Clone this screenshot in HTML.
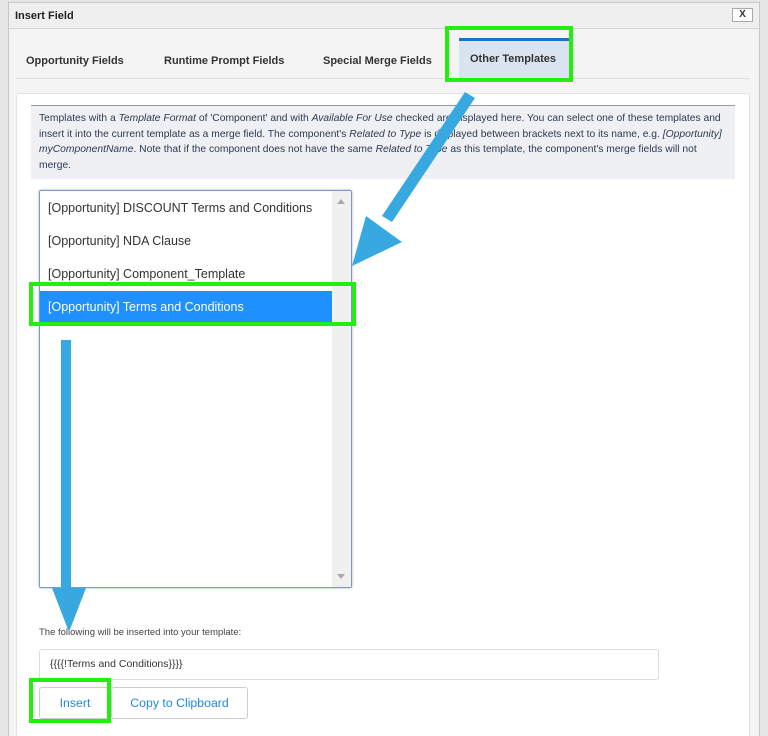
<!DOCTYPE html>
<html style="overflow:hidden;height:736px"><head><meta charset="utf-8"><style>
*{box-sizing:border-box;margin:0;padding:0}
body{width:768px;height:736px;overflow:hidden;background:#e6e6e6;font-family:"Liberation Sans",sans-serif;position:relative}
.abs{position:absolute}
#dlg{left:8px;top:2px;width:752px;height:734px;background:#f4f4f4;border:1px solid #c8c8c8;border-bottom:0;overflow:hidden}
#hdr{left:0;top:0;width:750px;height:26px;background:#efefef;border-bottom:1px solid #d6d6d6;font-size:11px;font-weight:bold;color:#222;padding:7px 0 0 6px}
#x{right:6px;top:5px;width:21px;height:14px;border:1px solid #aaa;background:#fff;font-size:10px;text-align:center;line-height:12px;font-weight:bold;color:#333}
.tab{top:52px;font-size:11px;font-weight:bold;color:#333}
#panel{left:7px;top:90px;width:734px;height:660px;background:#fff;border:1px solid #e2e2e2;border-radius:3px}
#desc{left:22px;top:102px;width:704px;height:74px;background:#eef0f3;border-top:1px solid #999;font-size:10.3px;line-height:15.5px;color:#2b3a55;padding:5px 8px}
#list{left:30px;top:187px;width:313px;height:398px;border:1px solid #7a9cc8;border-radius:2px;background:#fff;box-shadow:0 0 2px #9ab}
#sb{right:0;top:0;width:19px;height:396px;background:#f0f0f0}
.it{left:8px;font-size:12.5px;color:#333}
#sel{left:0;top:100px;width:292px;height:33px;background:#1e90ff}
#inp{left:30px;top:646px;width:620px;height:31px;border:1px solid #ddd;border-radius:3px;font-size:10.5px;color:#333;padding:8px 10px}
.btn{top:684px;height:32px;border:1px solid #ccc;border-radius:3px;background:#fff;font-size:12.3px;color:#1e88e5;text-align:center;line-height:30px}
</style></head><body>
<div id="dlg" class="abs">
 <div id="hdr" class="abs">Insert Field<div id="x" class="abs">X</div></div>
 <div class="abs" style="left:450px;top:35px;width:114px;height:40px;background:#dae4f0;border-top:3px solid #1a6fd0"></div>
 <div class="tab abs" style="left:17px">Opportunity Fields</div>
 <div class="tab abs" style="left:155px">Runtime Prompt Fields</div>
 <div class="tab abs" style="left:314px">Special Merge Fields</div>
 <div class="tab abs" style="left:461px;top:50px">Other Templates</div>
 <div class="abs" style="left:7px;top:75px;width:734px;height:1px;background:#ddd"></div>
 <div id="panel" class="abs"></div>
 <div id="desc" class="abs">Templates with a <i>Template Format</i> of 'Component' and with <i>Available For Use</i> checked are displayed here. You can select one of these templates and insert it into the current template as a merge field. The component's <i>Related to Type</i> is displayed between brackets next to its name, e.g. <i>[Opportunity] myComponentName</i>. Note that if the component does not have the same <i>Related to Type</i> as this template, the component's merge fields will not merge.</div>
 <div id="list" class="abs">
  <div id="sb" class="abs"><div class="abs" style="left:5px;top:8px;border:4px solid transparent;border-bottom:5px solid #aaa;border-top:0"></div><div class="abs" style="left:5px;top:383px;border:4px solid transparent;border-top:5px solid #aaa;border-bottom:0"></div></div>
  <div class="it abs" style="top:10px">[Opportunity] DISCOUNT Terms and Conditions</div>
  <div class="it abs" style="top:43px">[Opportunity] NDA Clause</div>
  <div class="it abs" style="top:76px">[Opportunity] Component_Template</div>
  <div id="sel" class="abs"></div>
  <div class="it abs" style="top:109px;color:#fff">[Opportunity] Terms and Conditions</div>
 </div>
 <div class="abs" style="left:30px;top:624px;font-size:9.5px;color:#444">The following will be inserted into your template:</div>
 <div id="inp" class="abs">{{{{!Terms and Conditions}}}}</div>
 <div class="btn abs" style="left:30px;width:72px">Insert</div>
 <div class="btn abs" style="left:102px;width:137px">Copy to Clipboard</div>
</div>
<svg class="abs" style="left:0;top:0" width="768" height="736">
 <g fill="none" stroke="#22ee10" stroke-width="4">
  <rect x="447" y="28" width="124" height="52"/>
  <rect x="31" y="284" width="323" height="40"/>
  <rect x="31" y="680" width="78" height="41"/>
 </g>
 <g fill="#38a8e0">
  <polygon points="465,92 475,98 392,222 382,216"/>
  <polygon points="352,266 366,216 402,242"/>
  <polygon points="61,340 71,340 71,590 61,590"/>
  <polygon points="52,588 86,588 69,632"/>
 </g>
</svg>
</body></html>
